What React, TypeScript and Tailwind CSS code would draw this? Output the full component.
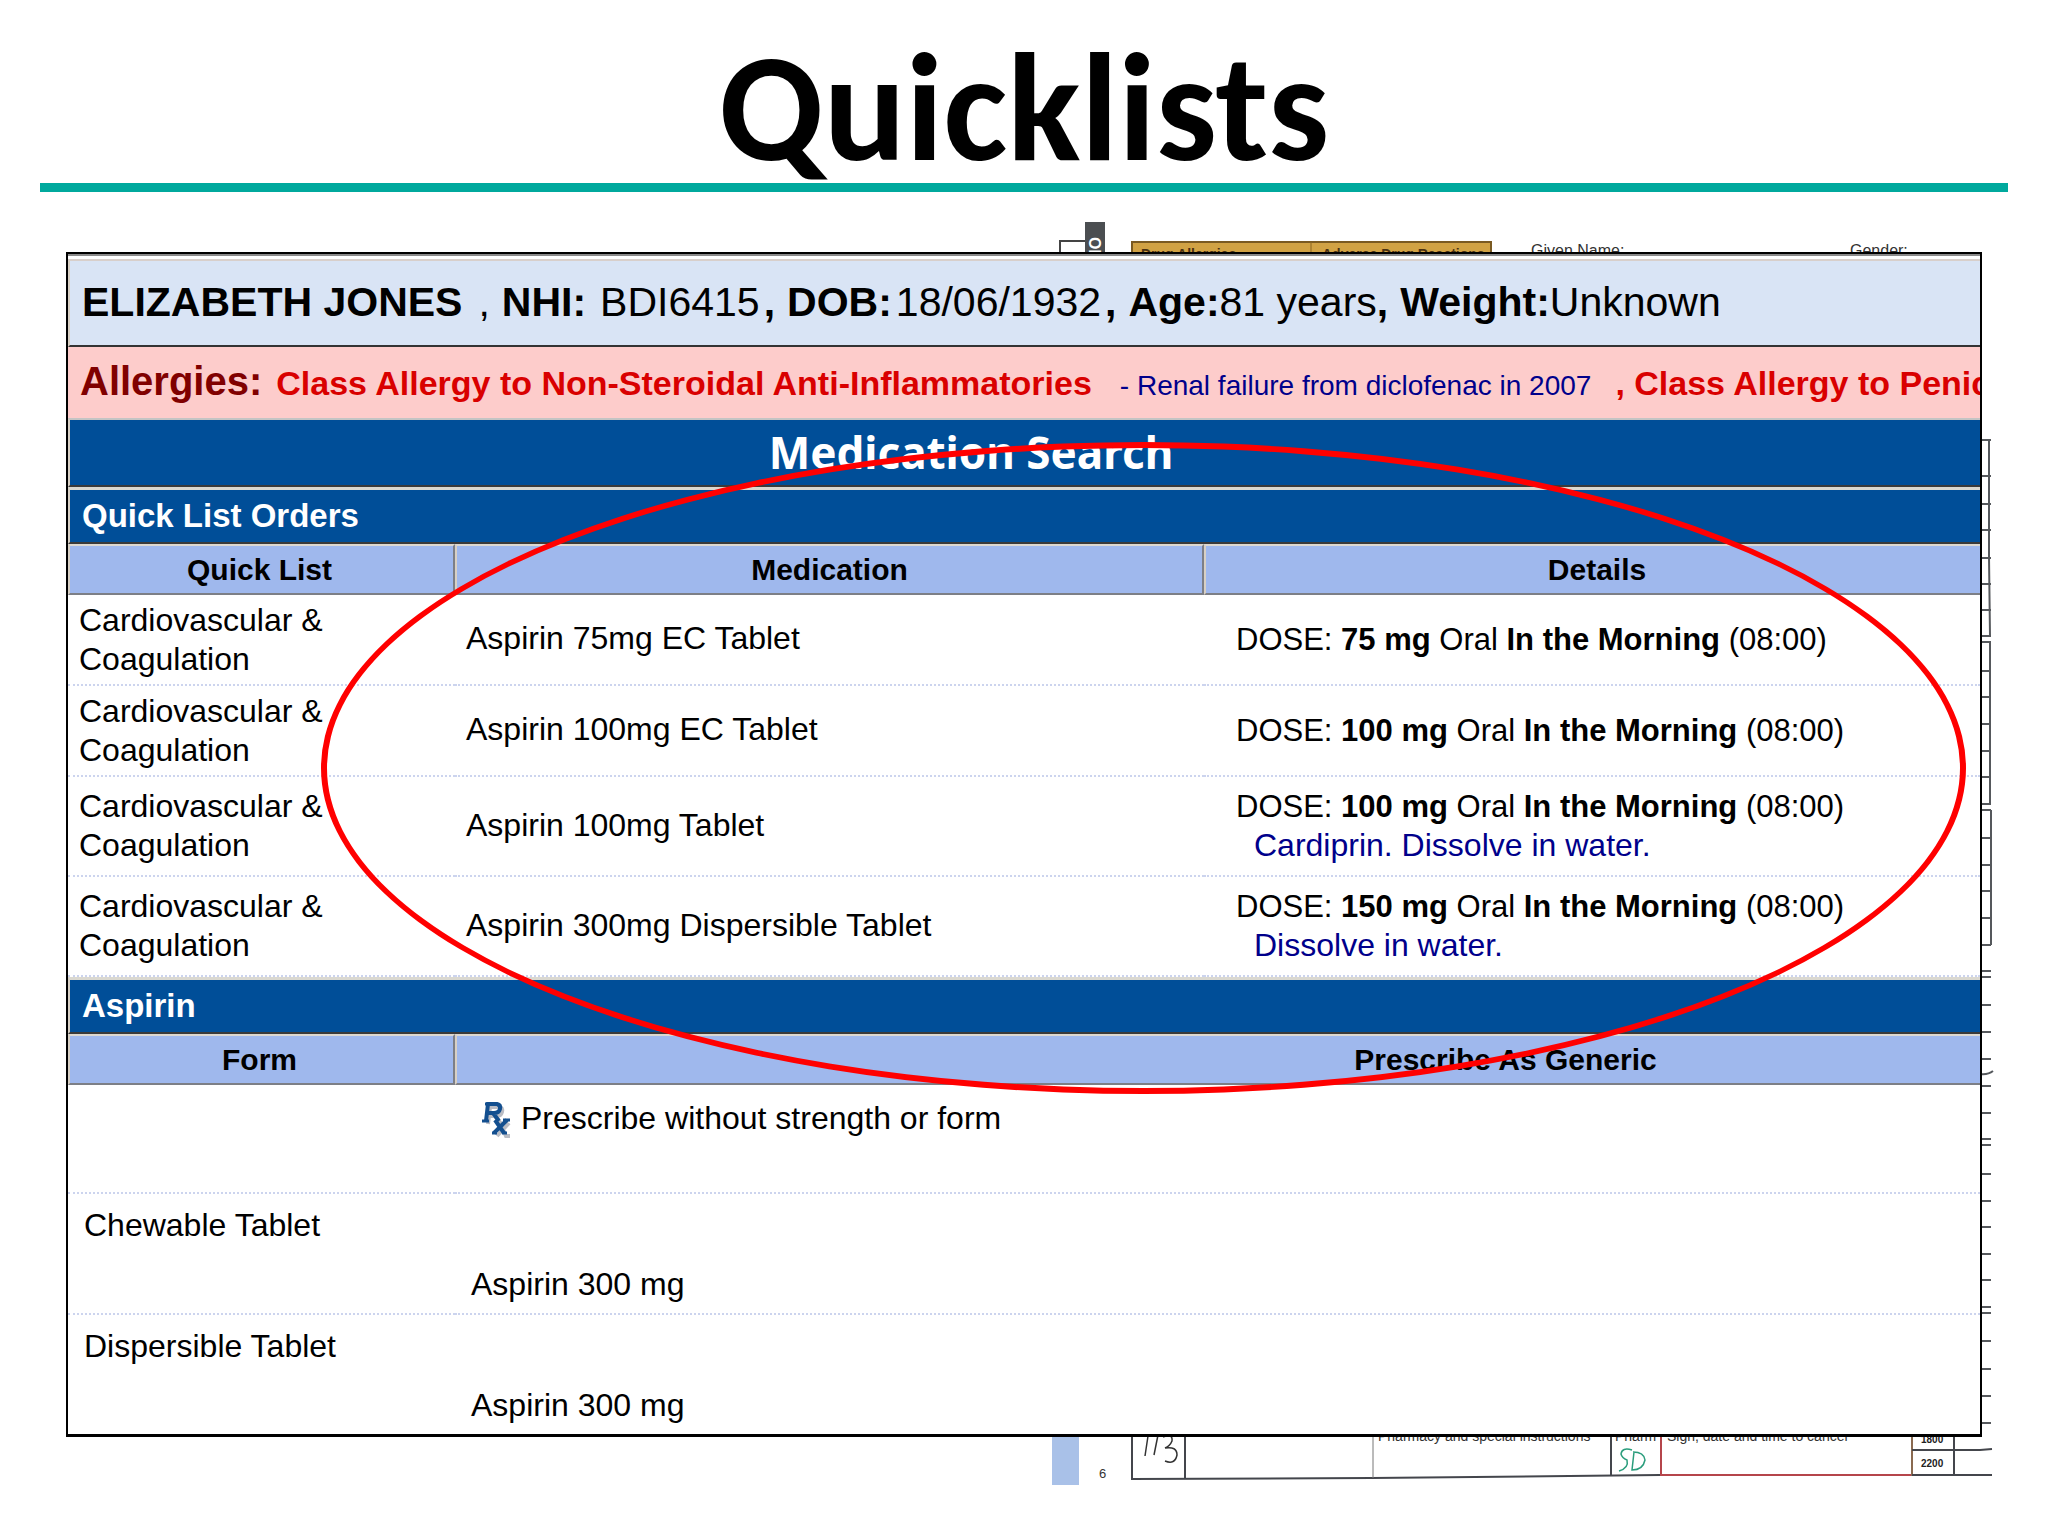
type Order = {
  list: string;
  medication: string;
  dose: string;
  note?: string;
};

const ORDERS: Order[] = [
  { list: "Cardiovascular & Coagulation", medication: "Aspirin 75mg EC Tablet", dose: "75 mg" },
  { list: "Cardiovascular & Coagulation", medication: "Aspirin 100mg EC Tablet", dose: "100 mg" },
  {
    list: "Cardiovascular & Coagulation",
    medication: "Aspirin 100mg Tablet",
    dose: "100 mg",
    note: "Cardiprin. Dissolve in water.",
  },
  {
    list: "Cardiovascular & Coagulation",
    medication: "Aspirin 300mg Dispersible Tablet",
    dose: "150 mg",
    note: "Dissolve in water.",
  },
];

const FORMS = [
  { form: "Chewable Tablet", strength: "Aspirin 300 mg" },
  { form: "Dispersible Tablet", strength: "Aspirin 300 mg" },
];

export default function App() {
  return (
    <main className="bg-white pb-[100px] font-['Liberation_Sans',Arial,sans-serif] text-black">
      <header className="mx-10 h-[192px] border-b-[9px] border-[#00a99d] text-center">
        <h1 className="pt-6 font-['Carlito','Lato',sans-serif] text-[153px] leading-[168px] font-bold">
          Quicklists
        </h1>
      </header>
      <div className="relative pt-[60px]">
        <PaperChart />
        <section className="relative mx-[66px] overflow-hidden border-2 border-b-[3px] border-black bg-white">
          <div className="border-t-2 border-[#8a8a8a] pt-[3px]">
            <PatientBanner />
            <AllergyBar />
            <h2 className="h-[69px] border-t-2 border-b-2 border-l-2 border-t-[#c4c4c4] border-b-[#3a3a3a] border-l-[#d8d0c4] bg-[#004e98] pr-[108px] text-center font-['Noto_Sans',sans-serif] text-[44px] leading-[64px] font-bold text-white">
              Medication Search
            </h2>
            <SectionBar>Quick List Orders</SectionBar>
            <QuickListTable />
            <SectionBar>Aspirin</SectionBar>
            <FormTable />
          </div>
          <div className="pointer-events-none absolute top-[188px] right-[14px] left-[253px] h-[652px] rounded-[50%] border-[6px] border-[#ff0000]" />
        </section>
      </div>
    </main>
  );
}

function PatientBanner() {
  return (
    <div className="flex h-[88px] items-center border-t-2 border-b-2 border-l-2 border-t-[#d8cfcb] border-b-[#333333] border-l-[#d8d0c4] bg-[#d9e4f5] pb-[3px] pl-3 text-[41px] leading-[48px] whitespace-nowrap">
      <b>ELIZABETH JONES</b>
      <span className="ml-4">,</span>
      <b className="ml-3">NHI:</b>
      <span className="ml-3.5">BDI6415</span>
      <b className="ml-1">,</b>
      <b className="ml-3">DOB:</b>
      <span className="ml-1">18/06/1932</span>
      <b className="ml-1">,</b>
      <b className="ml-3">Age:</b>
      <span>81 years</span>
      <b>,</b>
      <b className="ml-3">Weight:</b>
      <span>Unknown</span>
    </div>
  );
}

function AllergyBar() {
  return (
    <div className="flex h-[71px] items-baseline overflow-hidden bg-[#fdcccb] pt-[10px] pl-3 whitespace-nowrap">
      <b className="text-[40px] leading-[48px] text-[#800000]">Allergies:</b>
      <b className="ml-3.5 text-[34px] text-[#d90000]">
        Class Allergy to Non-Steroidal Anti-Inflammatories
      </b>
      <span className="ml-7 text-[28px] text-[#00008b]">- Renal failure from diclofenac in 2007</span>
      <b className="ml-6 text-[34px] text-[#d90000]">, Class Allergy to Penic</b>
    </div>
  );
}

function SectionBar({ children }: { children: React.ReactNode }) {
  return (
    <h3 className="h-[57px] border-t-[3px] border-b-2 border-l-2 border-t-[#dad8d0] border-b-[#3a3a3a] border-l-[#d8d0c4] bg-[#004e98] pl-3 text-[33px] leading-[52px] font-bold text-white">
      {children}
    </h3>
  );
}

function HeadCell({ children, className = "" }: { children: React.ReactNode; className?: string }) {
  return (
    <th
      scope="col"
      className={`h-[51px] border-t-2 border-b-2 border-l-2 border-t-[#ddd8d0] border-b-[#7d7f86] border-l-[#d8d0c4] bg-[#9fb8ed] py-0 text-[30px] leading-[36px] font-bold ${className}`}
    >
      {children}
    </th>
  );
}

function QuickListTable() {
  const cell = "border-b-2 border-dotted border-[#ccd4ee] pt-0 pr-0";
  return (
    <table className="w-full table-fixed border-separate border-spacing-0 text-[32px] leading-[39px]">
      <colgroup>
        <col className="w-[387px]" />
        <col className="w-[749px]" />
        <col />
      </colgroup>
      <thead>
        <tr>
          <HeadCell className="border-r-2 border-r-[#7d7f86] pr-1">Quick List</HeadCell>
          <HeadCell className="border-r-2 border-r-[#7d7f86]">Medication</HeadCell>
          <HeadCell className="pl-2">Details</HeadCell>
        </tr>
      </thead>
      <tbody>
        {ORDERS.map((order) => (
          <tr key={order.medication} className={order.note ? "h-[100px]" : "h-[91px]"}>
            <td className={`${cell} pl-[11px]`}>
              <div className="w-[280px]">{order.list}</div>
            </td>
            <td className={`${cell} pb-[2px] pl-[11px]`}>{order.medication}</td>
            <td className={`${cell} pl-8`}>
              <div className="text-[31px]">
                DOSE: <b>{order.dose}</b> Oral <b>In the Morning</b> (08:00)
              </div>
              {order.note && <div className="pl-[18px] text-[#00008b]">{order.note}</div>}
            </td>
          </tr>
        ))}
      </tbody>
    </table>
  );
}

function FormTable() {
  const cell = "border-b-2 border-dotted border-[#ccd4ee] px-4";
  return (
    <table className="w-full table-fixed border-separate border-spacing-0 text-[32px] leading-[39px]">
      <colgroup>
        <col className="w-[387px]" />
        <col />
      </colgroup>
      <thead>
        <tr>
          <HeadCell className="border-r-2 border-r-[#7d7f86] pr-1">Form</HeadCell>
          <HeadCell className="pl-[574px]">Prescribe As Generic</HeadCell>
        </tr>
      </thead>
      <tbody>
        <tr className="h-[109px]">
          <td className={cell} />
          <td className={`${cell} pt-[14px] align-top`}>
            <a href="#prescribe" className="flex items-center gap-2.5 pl-[10px]">
              <RxIcon />
              Prescribe without strength or form
            </a>
          </td>
        </tr>
        {FORMS.map((row) => (
          <tr key={row.form} className="h-[121px] last:h-[119px] last:[&>td]:border-b-0">
            <td className={`${cell} pt-3 align-top`}>{row.form}</td>
            <td className={`${cell} pt-[71px] align-top`}>{row.strength}</td>
          </tr>
        ))}
      </tbody>
    </table>
  );
}

function RxIcon() {
  return (
    <svg width="30" height="38" viewBox="0 0 30 38" fill="none" aria-hidden="true">
      <g stroke="#b9bcc4" strokeWidth="4" transform="translate(2 3)">
        <path d="M5 21 7 4h9q4 1 3 5-1 4-6 4H7M12 13l6 8" />
        <path d="M13 20h4l6 13h4M26 20l-12 13" />
      </g>
      <g stroke="#134f8f" strokeWidth="4">
        <path d="M5 21 7 4h9q4 1 3 5-1 4-6 4H7M12 13l6 8" />
        <path d="M1 21h7M4 4h6" strokeWidth="3" />
        <path d="M14 20l9 13M26 20 13 33" />
        <path d="M22 20h7M11 33h5M21 33h5" strokeWidth="3" />
      </g>
    </svg>
  );
}

const TICKS = [
  248, 284, 312, 338, 366, 392, 418, 444, 450, 479, 505, 532, 559, 585, 612, 618, 646, 673, 699, 726,
  753, 779, 785, 813, 840, 867, 894, 921, 947, 953, 982, 1009, 1035, 1062, 1088, 1115, 1121, 1149,
  1177, 1204, 1231,
];

// Paper drug chart lying under the panel; only its edges show
function PaperChart() {
  return (
    <svg
      className="absolute top-0 right-[48px]"
      width="952"
      height="1304"
      viewBox="1048 0 952 1304"
      fill="none"
      fontFamily="Liberation Sans, Arial, sans-serif"
    >
      <path d="M1085 49h-25v14" stroke="#444" strokeWidth="2" />
      <path d="M1085 30h20v34h-20z" fill="#4b4e51" />
      <text x="45" y="-1089" transform="rotate(90)" fill="#fff" fontSize="16" fontWeight="bold">
        ON
      </text>
      <path d="M1132 50h359v16h-359z" fill="#d1a244" stroke="#7a5a22" strokeWidth="2" />
      <path d="M1311 50v14" stroke="#8a6420" />
      <g fill="#4a3010" fontSize="14" fontWeight="bold">
        <text x="1141" y="67">Drug Allergies</text>
        <text x="1322" y="67">Adverse Drug Reactions</text>
      </g>
      <g fill="#333" fontSize="16">
        <text x="1531" y="64">Given Name:</text>
        <text x="1850" y="64">Gender:</text>
      </g>

      <path d="M1989 248v117l1 79M1990 450v162M1991 618v135" stroke="#55585c" strokeWidth="2" />
      {TICKS.map((y) => (
        <path key={y} d={`M1980 ${y}h11`} stroke="#55585c" strokeWidth="2" />
      ))}
      <path d="M1980 882q8 1 13-3" stroke="#55585c" strokeWidth="2" />

      <path d="M1052 1240h27v53h-27z" fill="#a9c1e8" />
      <text x="1099" y="1286" fill="#333" fontSize="13">6</text>
      <path d="M1132 1240v47l240-1 288-3M1185 1240v46M1611 1240v44" stroke="#44464c" strokeWidth="2" />
      <path d="M1373 1240v46" stroke="#777" />
      <path d="M1661 1240v43h251" stroke="#b5454b" strokeWidth="2" />
      <path d="M1912 1240v44" stroke="#8a6a50" strokeWidth="2" />
      <path d="M1912 1258h68l12-1M1912 1283h80M1954 1240v43" stroke="#44464c" strokeWidth="2" />
      <g fill="#333" fontSize="14">
        <text x="1378" y="1249">Pharmacy and special instructions</text>
        <text x="1615" y="1249">Pharm</text>
        <text x="1667" y="1249">Sign, date and time to cancel</text>
      </g>
      <g fill="#222" fontSize="10" fontWeight="bold">
        <text x="1921" y="1251">1800</text>
        <text x="1921" y="1275">2200</text>
      </g>
      <path
        d="M1148 1244l-3 20M1158 1243l-4 20M1163 1245q10-4 9 4-2 5-7 7 12-2 12 7-2 10-12 6"
        stroke="#333"
        strokeWidth="1.5"
      />
      <path
        d="M1632 1258q-10-3-11 4 1 4 6 6 2 8-8 11M1634 1260l-2 18q11 0 13-10-1-8-12-8"
        stroke="#2a9d7c"
        strokeWidth="1.5"
      />
    </svg>
  );
}
